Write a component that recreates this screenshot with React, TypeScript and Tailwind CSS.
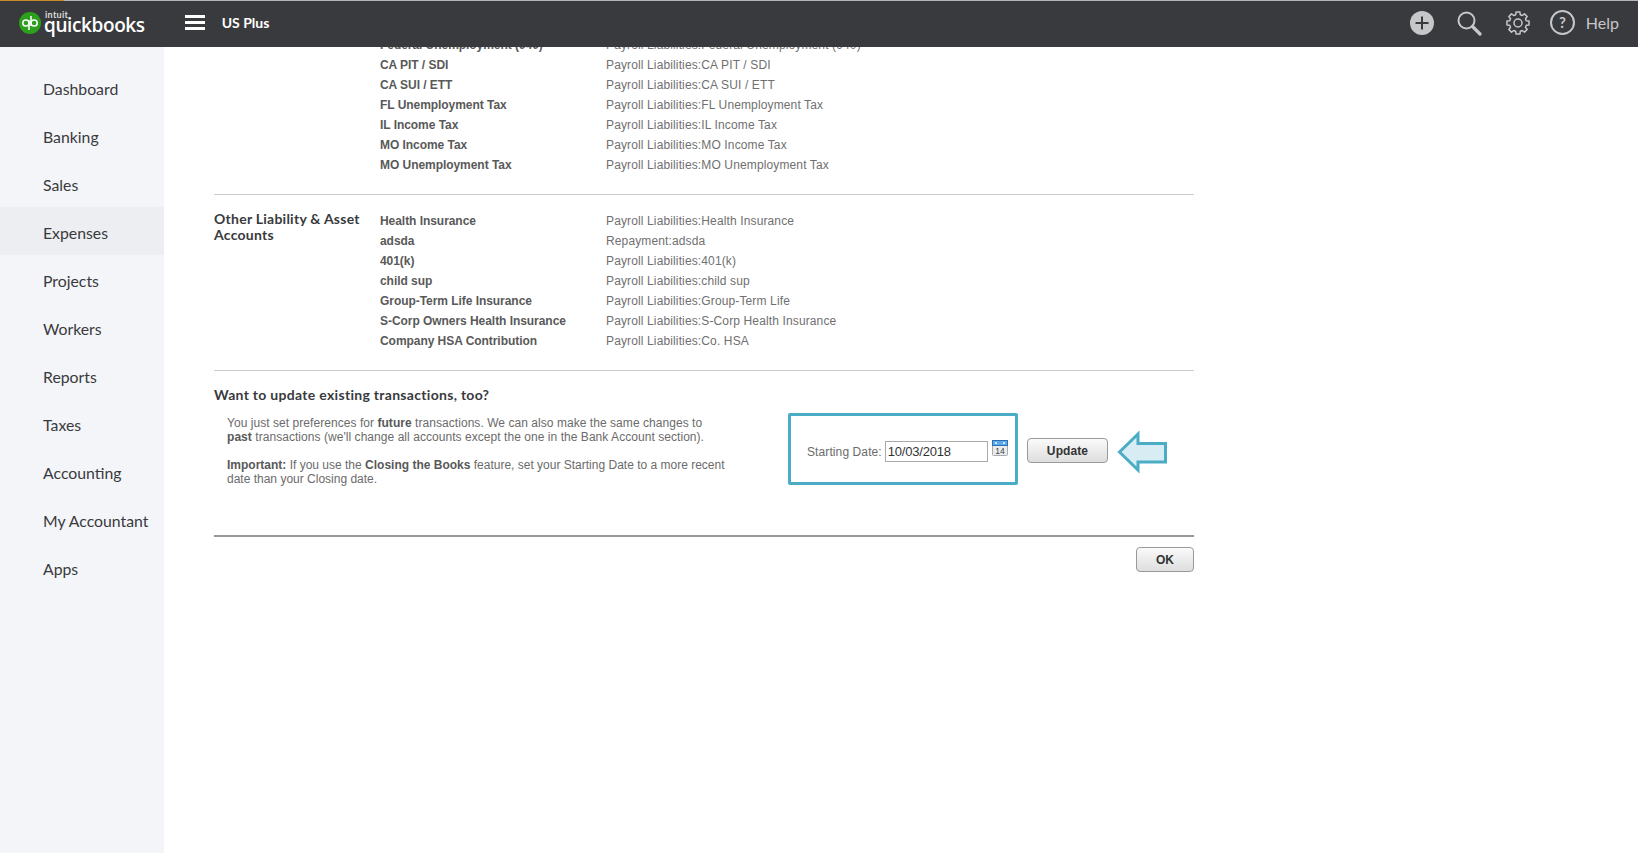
const navItems = [
  "Dashboard",
  "Banking",
  "Sales",
  "Expenses",
  "Projects",
  "Workers",
  "Reports",
  "Taxes",
  "Accounting",
  "My Accountant",
  "Apps",
];

const taxRows = [
  ["Federal Unemployment (940)", "Payroll Liabilities:Federal Unemployment (940)"],
  ["CA PIT / SDI", "Payroll Liabilities:CA PIT / SDI"],
  ["CA SUI / ETT", "Payroll Liabilities:CA SUI / ETT"],
  ["FL Unemployment Tax", "Payroll Liabilities:FL Unemployment Tax"],
  ["IL Income Tax", "Payroll Liabilities:IL Income Tax"],
  ["MO Income Tax", "Payroll Liabilities:MO Income Tax"],
  ["MO Unemployment Tax", "Payroll Liabilities:MO Unemployment Tax"],
];

const otherRows = [
  ["Health Insurance", "Payroll Liabilities:Health Insurance"],
  ["adsda", "Repayment:adsda"],
  ["401(k)", "Payroll Liabilities:401(k)"],
  ["child sup", "Payroll Liabilities:child sup"],
  ["Group-Term Life Insurance", "Payroll Liabilities:Group-Term Life"],
  ["S-Corp Owners Health Insurance", "Payroll Liabilities:S-Corp Health Insurance"],
  ["Company HSA Contribution", "Payroll Liabilities:Co. HSA"],
];

// 8 tooth gear outline, centre 12,12
function gearPath() {
  const pts: string[] = [];
  for (let i = 0; i < 8; i++) {
    const a = (i * Math.PI) / 4;
    const steps: [number, number][] = [
      [8.6, -0.27],
      [11.2, -0.17],
      [11.2, 0.17],
      [8.6, 0.27],
    ];
    steps.forEach(([r, d]) => {
      pts.push(`${(12 + r * Math.cos(a + d)).toFixed(2)},${(12 + r * Math.sin(a + d)).toFixed(2)}`);
    });
  }
  return pts.join(" ");
}

function AccountRows({ rows }: { rows: string[][] }) {
  return (
    <div>
      {rows.map(([name, account]) => (
        <div key={name} className="flex h-5 items-center text-xs">
          <div className="w-[226px] font-bold tracking-[-0.05px] text-[#595959]">{name}</div>
          <div className="tracking-[0.13px] text-[#707070]">{account}</div>
        </div>
      ))}
    </div>
  );
}

function Header() {
  return (
    <header className="relative flex h-[47px] shrink-0 items-center bg-[#393a3d] pb-[2px] font-['Lato',sans-serif] text-white">
      <div className="absolute left-0 right-0 top-0 flex h-px">
        <div className="w-16 bg-[#c8892b]" />
        <div className="flex-1 bg-[#b5b5b5]" />
      </div>
      <div className="ml-[19px] flex h-[22px] w-[22px] items-center justify-center rounded-full bg-[#2ca01c]">
        <svg width="16" height="14" viewBox="0 0 16 14" fill="none" stroke="white" strokeWidth="1.5">
          <circle cx="3.9" cy="7" r="3.1" />
          <circle cx="12.1" cy="7" r="3.1" />
          <path d="M7 3.9V14M9 0v10.1" />
        </svg>
      </div>
      <div className="ml-[3px] flex flex-col leading-none">
        <span className="-mb-[3px] ml-px text-[9px] font-bold tracking-[0.3px] text-[#dcdcdc]">intuit</span>
        <span className="font-['Open_Sans',sans-serif] text-[19px] font-semibold tracking-[-0.4px]">quickbooks</span>
      </div>
      <div className="ml-[40px] flex w-5 flex-col gap-[3px]">
        <div className="h-[3px] bg-white" />
        <div className="h-[3px] bg-white" />
        <div className="h-[3px] bg-white" />
      </div>
      <div className="ml-[17px] text-sm font-bold">US Plus</div>
      <div className="ml-auto flex items-center text-[#c6c7c9]">
        <div className="flex h-6 w-6 items-center justify-center rounded-full bg-[#c6c7c9]">
          <svg width="14" height="14" viewBox="0 0 14 14" stroke="#393a3d" strokeWidth="2">
            <path d="M7 0.5v13M0.5 7h13" />
          </svg>
        </div>
        <svg className="ml-[22px]" width="26" height="26" viewBox="0 0 26 26" fill="none" stroke="currentColor">
          <circle cx="10.5" cy="10.5" r="8" strokeWidth="2" />
          <path d="M16.5 16.5 24 24" strokeWidth="3.2" strokeLinecap="round" />
        </svg>
        <svg className="ml-[24px]" width="24" height="24" viewBox="0 0 24 24" fill="none" stroke="currentColor" strokeWidth="1.5" strokeLinejoin="round">
          <polygon points={gearPath()} />
          <circle cx="12" cy="12" r="4" />
        </svg>
        <div className="ml-5 flex h-[25px] w-[25px] items-center justify-center rounded-full border-2 border-[#c6c7c9] text-[15px] font-bold">
          ?
        </div>
        <div className="ml-[11px] mr-[19px] text-[16px]">Help</div>
      </div>
    </header>
  );
}

function Sidebar() {
  return (
    <aside className="w-[164px] shrink-0 bg-[#f4f5f8] pt-4 font-['Lato',sans-serif] text-[15.8px] text-[#393a3d]">
      {navItems.map((item) => (
        <div
          key={item}
          className={`flex h-12 items-center pl-[43px] pt-[3px] ${item === "Expenses" ? "bg-[#eceef1]" : ""}`}
        >
          {item}
        </div>
      ))}
    </aside>
  );
}

function ArrowIcon() {
  return (
    <svg width="50" height="42" viewBox="0 0 50 42">
      <path
        d="M2.5 21 21 3v9.5h27.5V31H21v8Z"
        fill="#d8ecf3"
        stroke="#4bacc6"
        strokeWidth="3"
      />
    </svg>
  );
}

function CalendarIcon() {
  return (
    <svg width="16" height="16" viewBox="0 0 16 16">
      <rect x="0.5" y="0.5" width="15" height="15" rx="1" fill="#ececec" stroke="#a5abb2" />
      <rect x="0.5" y="0.5" width="15" height="5" fill="#5aaaf0" stroke="#2f6fb5" />
      <rect x="3" y="2" width="2" height="2" fill="#cfe6fb" />
      <rect x="11" y="2" width="2" height="2" fill="#cfe6fb" />
      <text x="8" y="14" textAnchor="middle" fontSize="8.5" fontFamily="'Liberation Sans',sans-serif" fill="#444">
        14
      </text>
    </svg>
  );
}

export default function App() {
  return (
    <div className="flex h-[853px] w-[1638px] flex-col overflow-hidden bg-white font-['Liberation_Sans',sans-serif]">
      <Header />
      <div className="flex min-h-0 flex-1">
        <Sidebar />
        <main className="min-w-0 flex-1 overflow-hidden">
          {/* page is scrolled a bit, first row sits under the header */}
          <div className="-mt-3 ml-[50px] w-[980px]">
            <div className="ml-[166px]">
              <AccountRows rows={taxRows} />
            </div>
            <div className="mt-[19px] border-t border-[#cccccc]" />

            <div className="mt-4 flex">
              <div className="w-[166px] pr-3 font-['Lato',sans-serif] text-sm font-bold leading-4 tracking-[0.25px] text-[#393a3d]">
                Other Liability &amp; Asset Accounts
              </div>
              <AccountRows rows={otherRows} />
            </div>
            <div className="mt-[19px] border-t border-[#cccccc]" />

            <div className="mt-[14px] font-['Lato',sans-serif] text-sm font-bold tracking-[0.3px] text-[#393a3d]">
              Want to update existing transactions, too?
            </div>

            <div className="mt-[11px] flex">
              <div className="ml-[13px] w-[503px] text-xs leading-[14px] text-[#6b6b6b]">
                <p className="tracking-[0.05px]">
                  You just set preferences for <b className="text-[#595959]">future</b> transactions. We can also make the same changes to
                  <br />
                  <b className="text-[#595959]">past</b> transactions (we'll change all accounts except the one in the Bank Account section).
                </p>
                <p className="mt-[14px]">
                  <b className="text-[#595959]">Important:</b> If you use the <b className="text-[#595959]">Closing the Books</b> feature, set your Starting Date to a more recent
                  <br />
                  date than your Closing date.
                </p>
              </div>
              <div className="-mt-[3px] ml-[58px] flex items-start">
                <div className="flex h-[72px] w-[230px] items-center rounded-[2px] border-[3px] border-[#4bacc6] pl-4 pt-[5px] text-xs tracking-[0.1px] text-[#6b6b6b]">
                  <span className="mr-[3px]">Starting Date:</span>
                  <input
                    readOnly
                    value="10/03/2018"
                    className="h-[21px] w-[103px] border border-[#aaa] pl-[2px] text-[13px] tracking-[-0.2px] text-[#333] outline-none"
                  />
                  <div className="-mt-[8px] ml-1">
                    <CalendarIcon />
                  </div>
                </div>
                <button className="ml-[9px] mt-[25px] h-[25px] w-[81px] rounded-[4px] border border-[#999] bg-gradient-to-b from-[#fafafa] to-[#dedede] pt-px text-xs font-bold tracking-[0.1px] text-[#333]">
                  Update
                </button>
                <div className="ml-[9px] mt-[18px]">
                  <ArrowIcon />
                </div>
              </div>
            </div>

            <div className="mt-[49px] border-t-2 border-[#999]" />
            <div className="mt-[10px] flex justify-end">
              <button className="h-[25px] w-[58px] rounded-[4px] border border-[#999] bg-gradient-to-b from-[#fafafa] to-[#dedede] pt-px text-xs font-bold text-[#333]">
                OK
              </button>
            </div>
          </div>
        </main>
      </div>
    </div>
  );
}
